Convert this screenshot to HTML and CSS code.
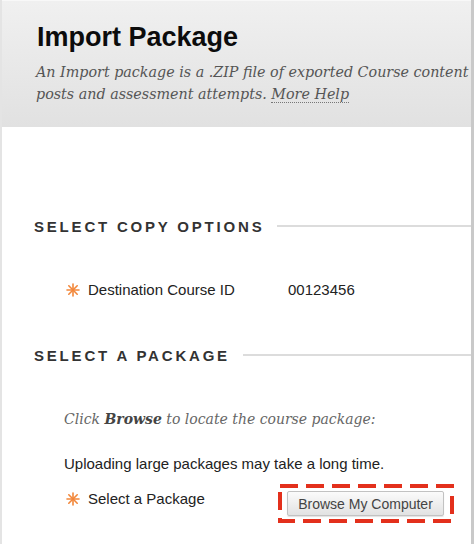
FILE: index.html
```html
<!DOCTYPE html>
<html>
<head>
<meta charset="utf-8">
<link rel="stylesheet" href="styles.css">
</head>
<body>
<div class="frame">
  <div class="header">
    <h1 class="title">Import Package</h1>
    <p class="desc">An Import package is a .ZIP file of exported Course content<br>posts and assessment attempts. <span class="help">More Help</span></p>
  </div>
  <div class="content">
    <div class="section-head sh1">
      <span class="sh-text">SELECT COPY OPTIONS</span>
      <span class="sh-line"></span>
    </div>
    <div class="row dest-row">
      <div class="label">
        <svg class="req" width="14" height="14" viewBox="0 0 14 14"><g stroke="#f2873a" stroke-width="1.6" stroke-linecap="round"><line x1="7" y1="1" x2="7" y2="13"/><line x1="1" y1="7" x2="13" y2="7"/><line x1="2.8" y1="2.8" x2="11.2" y2="11.2"/><line x1="11.2" y1="2.8" x2="2.8" y2="11.2"/></g></svg>
        <span>Destination Course ID</span>
      </div>
      <div class="value">00123456</div>
    </div>
    <div class="section-head sh2">
      <span class="sh-text">SELECT A PACKAGE</span>
      <span class="sh-line"></span>
    </div>
    <p class="instr">Click <b>Browse</b> to locate the course package:</p>
    <p class="note">Uploading large packages may take a long time.</p>
    <div class="row pkg-row">
      <div class="label pkg-label">
        <svg class="req" width="14" height="14" viewBox="0 0 14 14"><g stroke="#f2873a" stroke-width="1.6" stroke-linecap="round"><line x1="7" y1="1" x2="7" y2="13"/><line x1="1" y1="7" x2="13" y2="7"/><line x1="2.8" y1="2.8" x2="11.2" y2="11.2"/><line x1="11.2" y1="2.8" x2="2.8" y2="11.2"/></g></svg>
        <span>Select a Package</span>
      </div>
      <div class="btn-wrap">
        <button class="btn">Browse My Computer</button>
        <svg class="dash" width="176" height="39" viewBox="0 0 176 39"><rect x="2" y="2" width="172" height="35" fill="none" stroke="#e3301c" stroke-width="4" stroke-dasharray="18 8"/></svg>
      </div>
    </div>
  </div>
</div>
</body>
</html>
```
FILE: styles.css
```css
html, body {
  margin: 0;
  padding: 0;
  background: #ffffff;
}
.frame {
  width: 474px;
  height: 544px;
  box-sizing: border-box;
  border-left: 2px solid #e4e4e4;
  border-right: 3px solid #c9c9c9;
  overflow: hidden;
  font-family: "Liberation Sans", Arial, sans-serif;
  color: #222;
}
.header {
  height: 127px;
  box-sizing: border-box;
  border-top: 1px solid #f8f8f8;
  background: linear-gradient(#f0f0f0, #e1e1e1);
  padding: 20px 0 0 35px;
  overflow: hidden;
}
.title {
  margin: 0;
  font-size: 27px;
  line-height: 32px;
  font-weight: bold;
  color: #0c0c0c;
}
.desc {
  margin: 8px 0 0 -1px;
  font-family: "DejaVu Serif", Georgia, serif;
  font-style: italic;
  font-size: 14.3px;
  line-height: 22px;
  color: #555;
  white-space: nowrap;
}
.help {
  border-bottom: 1px dotted #777;
}
.content {
  padding-left: 32px;
}
.section-head {
  display: flex;
  align-items: center;
  height: 20px;
}
.sh1 { margin-top: 89px; }
.sh2 { margin-top: 45px; }
.sh-text {
  font-size: 15px;
  font-weight: bold;
  letter-spacing: 2.8px;
  color: #333;
  white-space: nowrap;
}
.sh-line {
  flex: 1;
  height: 0;
  border-top: 2px solid #dcdcdc;
  margin-left: 13px;
}
.row {
  display: flex;
  padding-left: 32px;
  font-size: 15px;
}
.dest-row {
  margin-top: 44px;
  line-height: 20px;
}
.label {
  display: flex;
  align-items: center;
  gap: 8px;
  width: 222px;
  box-sizing: border-box;
}
.req {
  display: block;
  flex: none;
}
.instr {
  margin: 44px 0 0 30px;
  font-family: "DejaVu Serif", Georgia, serif;
  font-style: italic;
  font-size: 14px;
  line-height: 20px;
  color: #666;
}
.instr b {
  color: #444;
}
.note {
  margin: 25px 0 0 30px;
  font-size: 15px;
  line-height: 20px;
}
.pkg-row {
  margin-top: 10px;
}
.pkg-label {
  width: 212px;
  align-self: flex-start;
  margin-top: 5px;
  line-height: 20px;
}
.btn-wrap {
  position: relative;
  width: 176px;
  height: 39px;
  box-sizing: border-box;
  padding: 7px 0 0 9px;
}
.btn {
  display: block;
  width: 157px;
  height: 25px;
  margin: 0;
  padding: 0;
  border: 1px solid #c2c2c2;
  border-radius: 2px;
  background: linear-gradient(#fbfbfb, #e2e2e2);
  box-shadow: 0 1px 1px rgba(0,0,0,0.12);
  font-family: "Liberation Sans", Arial, sans-serif;
  font-size: 14px;
  color: #444;
}
.dash {
  position: absolute;
  left: 0;
  top: 0;
}
```
